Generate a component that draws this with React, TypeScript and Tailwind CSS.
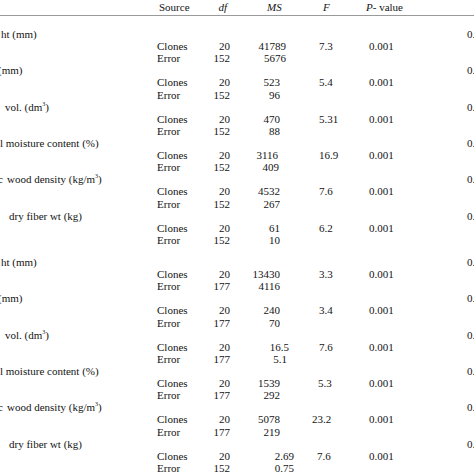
type Group = {
  label: string;
  labelClass: string;
  cut?: string;
  clones: { df: string; ms: string; msPad: string; f: string; fPad: string };
  error: { df: string; ms: string; msPad: string };
};

const block1: Group[] = [
  {
    label: "ht (mm)",
    labelClass: "ml-[1px]",
    clones: { df: "20", ms: "41789", msPad: "pr-[14px]", f: "7.3", fPad: "pl-[19px]" },
    error: { df: "152", ms: "5676", msPad: "pr-[14px]" },
  },
  {
    label: "(mm)",
    labelClass: "ml-[-2px]",
    clones: { df: "20", ms: "523", msPad: "pr-[20px]", f: "5.4", fPad: "pl-[19px]" },
    error: { df: "152", ms: "96", msPad: "pr-[20px]" },
  },
  {
    label: "vol. (dm|3|)",
    labelClass: "ml-[5px]",
    clones: { df: "20", ms: "470", msPad: "pr-[20px]", f: "5.31", fPad: "pl-[19px]" },
    error: { df: "152", ms: "88", msPad: "pr-[20px]" },
  },
  {
    label: "l moisture content (%)",
    labelClass: "ml-[0px]",
    clones: { df: "20", ms: "3116", msPad: "pr-[22px]", f: "16.9", fPad: "pl-[19px]" },
    error: { df: "152", ms: "409", msPad: "pr-[21px]" },
  },
  {
    label: "wood density (kg/m|3|)",
    labelClass: "ml-[0px]",
    cut: "c",
    clones: { df: "20", ms: "4532", msPad: "pr-[20px]", f: "7.6", fPad: "pl-[19px]" },
    error: { df: "152", ms: "267", msPad: "pr-[20px]" },
  },
  {
    label: "dry fiber wt (kg)",
    labelClass: "ml-[9px]",
    clones: { df: "20", ms: "61", msPad: "pr-[20px]", f: "6.2", fPad: "pl-[19px]" },
    error: { df: "152", ms: "10", msPad: "pr-[20px]" },
  },
];

const block2: Group[] = [
  {
    label: "ht (mm)",
    labelClass: "ml-[1px]",
    clones: { df: "20", ms: "13430", msPad: "pr-[20px]", f: "3.3", fPad: "pl-[19px]" },
    error: { df: "177", ms: "4116", msPad: "pr-[20px]" },
  },
  {
    label: "(mm)",
    labelClass: "ml-[-2px]",
    clones: { df: "20", ms: "240", msPad: "pr-[20px]", f: "3.4", fPad: "pl-[19px]" },
    error: { df: "177", ms: "70", msPad: "pr-[20px]" },
  },
  {
    label: "vol. (dm|3|)",
    labelClass: "ml-[5px]",
    clones: { df: "20", ms: "16.5", msPad: "pr-[11px]", f: "7.6", fPad: "pl-[19px]" },
    error: { df: "177", ms: "5.1", msPad: "pr-[13px]" },
  },
  {
    label: "l moisture content (%)",
    labelClass: "ml-[0px]",
    clones: { df: "20", ms: "1539", msPad: "pr-[20px]", f: "5.3", fPad: "pl-[18px]" },
    error: { df: "177", ms: "292", msPad: "pr-[20px]" },
  },
  {
    label: "wood density (kg/m|3|)",
    labelClass: "ml-[0px]",
    cut: "c",
    clones: { df: "20", ms: "5078", msPad: "pr-[20px]", f: "23.2", fPad: "pl-[12px]" },
    error: { df: "177", ms: "219", msPad: "pr-[20px]" },
  },
  {
    label: "dry fiber wt (kg)",
    labelClass: "ml-[9px]",
    clones: { df: "20", ms: "2.69", msPad: "pr-[6px]", f: "7.6", fPad: "pl-[17px]" },
    error: { df: "152", ms: "0.75", msPad: "pr-[6px]" },
  },
];

const cols = "grid grid-cols-[157px_43px_30px_70px_60px_107px_7px]";
const row = "h-[12.12px] leading-[12.12px] whitespace-nowrap";

// "|3|" marks a superscript
function Label({ text }: { text: string }) {
  const parts = text.split("|");
  return (
    <>
      {parts.map((p, i) =>
        i % 2 === 1 ? (
          <sup key={i} className="text-[6px] top-[-5px]">
            {p}
          </sup>
        ) : (
          <span key={i}>{p}</span>
        )
      )}
    </>
  );
}

function GroupRows({ g }: { g: Group }) {
  return (
    <>
      <div className={`${cols} ${row}`}>
        <div className="col-span-6 overflow-hidden">
          <div className={g.labelClass}>
            {g.cut ? (
              <span className="inline-block w-[3px] mr-[4px] overflow-hidden align-top">
                <span className="inline-block ml-[-2px]">{g.cut}</span>
              </span>
            ) : null}
            <Label text={g.label} />
          </div>
        </div>
        <div className="overflow-visible">0.0</div>
      </div>
      <div className={`${cols} ${row}`}>
        <div />
        <div>Clones</div>
        <div className="text-right">{g.clones.df}</div>
        <div className={`text-right ${g.clones.msPad}`}>{g.clones.ms}</div>
        <div className={g.clones.fPad}>{g.clones.f}</div>
        <div className="pl-[9px]">0.001</div>
        <div />
      </div>
      <div className={`${cols} ${row}`}>
        <div />
        <div>Error</div>
        <div className="text-right">{g.error.df}</div>
        <div className={`text-right ${g.error.msPad}`}>{g.error.ms}</div>
        <div />
        <div />
        <div />
      </div>
    </>
  );
}

export default function App() {
  return (
    <div className="w-[474px] h-[474px] overflow-hidden bg-white text-[#141414] text-[11px] font-['Liberation_Serif','Times_New_Roman',serif]">
      <div className={`${cols} h-[16px] leading-[14px] border-b border-[#9a9a9a] whitespace-nowrap`}>
        <div />
        <div className="pl-[2px]">Source</div>
        <div className="text-right italic pr-[3px]">df</div>
        <div className="italic pl-[37px]">MS</div>
        <div className="italic pl-[23px]">F</div>
        <div className="pl-[6px]">
          <span className="italic">P</span>- value
        </div>
        <div />
      </div>
      <div className="h-[12px]" />
      {block1.map((g, i) => (
        <GroupRows key={i} g={g} />
      ))}
      <div className="h-[10px]" />
      {block2.map((g, i) => (
        <GroupRows key={i} g={g} />
      ))}
    </div>
  );
}
